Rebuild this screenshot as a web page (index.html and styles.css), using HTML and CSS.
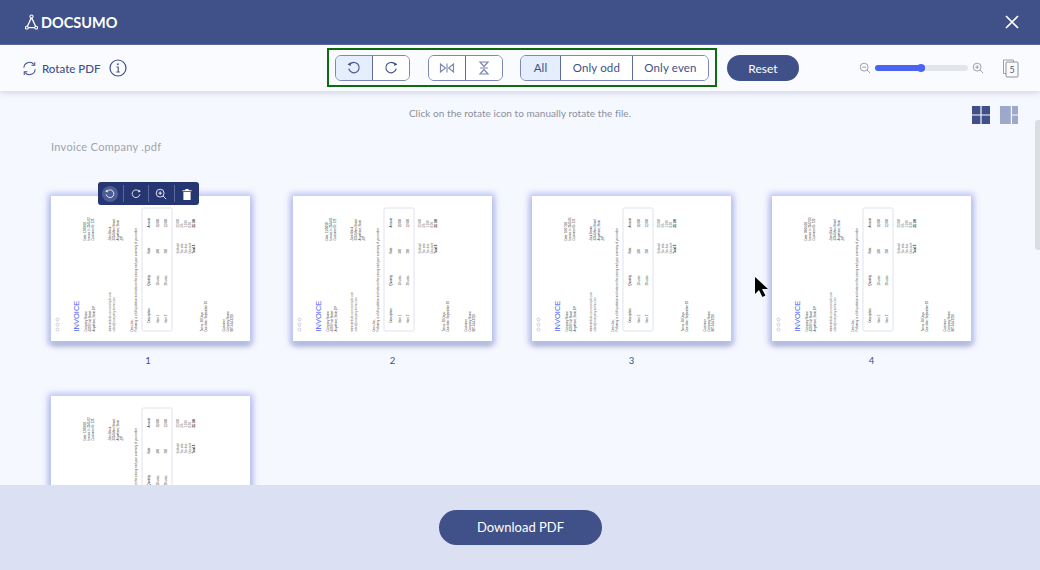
FILE: index.html
```html
<!DOCTYPE html>
<html lang="en">
<head>
  <meta charset="UTF-8" />
  <title>Docsumo - Rotate PDF</title>
  <link rel="stylesheet" href="styles.css">
</head>
<body>
  <svg class="sprites" width="0" height="0">
    <symbol id="ccw" viewBox="0 0 16 16"><path d="M4 4.2A5.2 5.2 0 1 1 2.9 9" fill="none" stroke="currentColor" stroke-width="1.1" stroke-linecap="round"/><path d="M1.6 4.4 4.5 2.2 4.9 5.9Z" fill="currentColor"/></symbol>
    <symbol id="cw" viewBox="0 0 16 16"><path d="M12 4.2A5.2 5.2 0 1 0 13.1 9" fill="none" stroke="currentColor" stroke-width="1.1" stroke-linecap="round"/><path d="M14.4 4.4 11.5 2.2 11.1 5.9Z" fill="currentColor"/></symbol>
    <symbol id="zoom-in" viewBox="0 0 14 14"><circle cx="6" cy="6" r="4.6" fill="none" stroke="currentColor" stroke-width="1"/><path d="M9.4 9.4 13 13M6 3.8v4.4M3.8 6h4.4" fill="none" stroke="currentColor" stroke-width="1"/></symbol>
    <symbol id="zoom-out" viewBox="0 0 14 14"><circle cx="6" cy="6" r="4.6" fill="none" stroke="currentColor" stroke-width="1"/><path d="M9.4 9.4 13 13M3.8 6h4.4" fill="none" stroke="currentColor" stroke-width="1"/></symbol>
  </svg>

  <header class="topbar">
    <div class="logo">
      <svg class="logo-icon" viewBox="0 0 14 17"><path d="M7 3.5 2 14.5h10Z" fill="none" stroke="#fff" stroke-width="1.4"/><circle cx="7" cy="2.6" r="1.7" fill="#405089" stroke="#fff" stroke-width="1.2"/><circle cx="2" cy="14.6" r="1.5" fill="#405089" stroke="#fff" stroke-width="1.2"/><circle cx="12" cy="14.6" r="1.5" fill="#405089" stroke="#fff" stroke-width="1.2"/></svg>
      <span>DOCSUMO</span>
    </div>
    <svg class="close-icon" viewBox="0 0 14 14"><path d="M1 1 13 13M13 1 1 13" stroke="#fff" stroke-width="1.7" fill="none"/></svg>
  </header>

  <div class="toolbar">
    <div class="toolbar-title">
      <svg class="sync-icon" viewBox="0 0 16 16"><path d="M2 7.2A6 6 0 0 1 12.6 3.6M14 8.8A6 6 0 0 1 3.4 12.4" fill="none" stroke="currentColor" stroke-width="1.1"/><path d="M13.6 1.2v3.4h-3.4M2.4 14.8v-3.4h3.4" fill="none" stroke="currentColor" stroke-width="1.1"/></svg>
      <span>Rotate PDF</span>
      <svg class="info-icon" viewBox="0 0 18 18"><circle cx="9" cy="9" r="8" fill="none" stroke="currentColor" stroke-width="1.2"/><path d="M7.6 8h1.6v5M7.4 13h3.4" fill="none" stroke="currentColor" stroke-width="1.1"/><circle cx="8.9" cy="5.2" r=".9" fill="currentColor"/></svg>
    </div>

    <div class="controls">
      <div class="btn-group">
        <button class="active icon-btn"><svg><use href="#ccw"/></svg></button>
        <button class="icon-btn"><svg><use href="#cw"/></svg></button>
      </div>
      <div class="btn-group">
        <button class="icon-btn"><svg viewBox="0 0 16 16"><path d="M1.5 4v8L6.3 8ZM14.5 4v8L9.7 8Z" fill="none" stroke="#7d88b3" stroke-width="1.2"/><path d="M8 3.5v9" stroke="#7d88b3" stroke-width="1.1"/></svg></button>
        <button class="icon-btn"><svg viewBox="0 0 16 16"><path d="M4 2h8L8 6.5ZM4 14h8L8 9.5Z" fill="none" stroke="#7d88b3" stroke-width="1.2"/><path d="M4 8h8" stroke="#7d88b3" stroke-width="1.1"/></svg></button>
      </div>
      <div class="btn-group text-group">
        <button class="active btn-all">All</button>
        <button class="btn-odd">Only odd</button>
        <button class="btn-even">Only even</button>
      </div>
    </div>

    <button class="reset-btn">Reset</button>

    <div class="zoom">
      <svg class="zoom-icon"><use href="#zoom-out"/></svg>
      <div class="slider"><div class="slider-fill"></div></div>
      <svg class="zoom-icon"><use href="#zoom-in"/></svg>
    </div>

    <div class="page-count">
      <svg viewBox="0 0 17 19"><path d="M11.5 3V1H1.5v13.5H4" fill="none" stroke="#9a9ea6" stroke-width="1"/><rect x="4" y="3" width="12" height="15" rx="1" fill="#fafbff" stroke="#8d9199" stroke-width="1"/></svg>
      <span>5</span>
    </div>
  </div>

  <main class="content">
    <p class="hint">Click on the rotate icon to manually rotate the file.</p>
    <div class="view-switch">
      <svg viewBox="0 0 18 18"><path d="M0 0h8.4v8.4H0ZM9.6 0H18v8.4H9.6ZM0 9.6h8.4V18H0ZM9.6 9.6H18V18H9.6Z" fill="#405089"/></svg>
      <svg viewBox="0 0 18 18"><path d="M0 0h10.8v18H0ZM12 0h6v8.4h-6ZM12 9.6h6V18h-6Z" fill="#9ea8cb"/></svg>
    </div>
    <h3 class="file-name">Invoice Company .pdf</h3>
    <div class="pages" id="pages"></div>

    <div class="scroll-thumb"></div>
    <svg class="cursor" viewBox="0 0 15 22"><path d="M1 0v17l4-4 3.4 7 3-1.4L8 12h6Z" fill="#000"/></svg>
  </main>

  <footer class="footer">
    <button class="download-btn">Download PDF</button>
  </footer>

  <script src="script.js"></script>
</body>
</html>
```

FILE: styles.css
```css
* {
  box-sizing: border-box;
}

html, body {
  height: 100%;
}

body {
  margin: 0;
  width: 1040px;
  height: 570px;
  overflow: hidden;
  display: flex;
  flex-direction: column;
  font-family: "Lato", sans-serif;
  background: #f6f8ff;
  color: #405089;
}

button {
  font-family: inherit;
  cursor: pointer;
}

.sprites {
  display: block;
  height: 0;
}

.topbar {
  height: 45px;
  flex: none;
  display: flex;
  align-items: center;
  justify-content: space-between;
  padding: 0 21px 0 25px;
  background: #405089;
  border-bottom: 1px solid #5a6a9e;
}

.logo {
  display: flex;
  align-items: center;
  gap: 3px;
  color: #fff;
  font-size: 14.5px;
  font-weight: 700;
}

.logo-icon {
  width: 13px;
  height: 16px;
}

.close-icon {
  width: 14px;
  height: 14px;
}

.toolbar {
  height: 46px;
  flex: none;
  display: flex;
  align-items: center;
  padding-left: 22px;
  background: #fafbff;
  box-shadow: 0 2px 6px rgba(60, 70, 110, 0.2);
  position: relative;
  z-index: 2;
}

.toolbar-title {
  width: 305px;
  display: flex;
  align-items: center;
  font-size: 11.5px;
  font-weight: 500;
}

.sync-icon {
  width: 15px;
  height: 15px;
  margin-right: 5px;
}

.info-icon {
  width: 18px;
  height: 18px;
  margin-left: 9px;
}

.controls {
  width: 390px;
  height: 39px;
  margin-top: -1px;
  padding: 0 6px;
  display: flex;
  align-items: center;
  gap: 18px;
  border: 2px solid #0f6b12;
}

.btn-group {
  display: flex;
  height: 26px;
  border: 1px solid #7d88b3;
  border-radius: 6px;
  overflow: hidden;
  background: #fff;
}

.btn-group button {
  height: 100%;
  padding: 0;
  border: none;
  border-right: 1px solid #5f6d9e;
  background: #fff;
  color: #405089;
}

.btn-group button:last-child {
  border-right: none;
}

.btn-group .active {
  background: #e4eefc;
}

.icon-btn {
  width: 37px;
  display: flex;
  align-items: center;
  justify-content: center;
}

.icon-btn svg {
  width: 16px;
  height: 16px;
}

.text-group {
  margin-left: -1px;
}

.text-group button {
  font-size: 11.5px;
  letter-spacing: 0.15px;
}

.btn-all {
  width: 40px;
}

.btn-odd {
  width: 73px;
}

.btn-even {
  width: 76px;
}

.reset-btn {
  width: 72px;
  height: 26px;
  margin-left: 10px;
  border: none;
  border-radius: 13px;
  background: #405089;
  color: #fff;
  font-size: 12px;
}

.zoom {
  display: flex;
  align-items: center;
  margin-left: 60px;
  gap: 4px;
}

.zoom-icon {
  width: 12px;
  height: 12px;
  color: #8f9399;
}

.slider {
  width: 93px;
  height: 6px;
  border-radius: 3px;
  background: #e2e5ea;
}

.slider-fill {
  width: 50px;
  height: 6px;
  border-radius: 3px;
  background: #4a63f5;
  position: relative;
}

.slider-fill::after {
  content: "";
  position: absolute;
  right: 0;
  top: -1px;
  width: 8px;
  height: 8px;
  border-radius: 50%;
  background: #4a63f5;
}

.page-count {
  width: 17px;
  height: 19px;
  margin-left: 18px;
  position: relative;
  font-size: 9px;
  color: #55595f;
}

.page-count svg {
  width: 17px;
  height: 19px;
}

.page-count span {
  position: absolute;
  left: 7.5px;
  top: 5px;
  line-height: 12px;
}

.content {
  flex: 1;
  position: relative;
  overflow: hidden;
  padding: 0 0 0 51px;
}

.hint {
  margin: 15px 0 0 -51px;
  text-align: center;
  font-size: 10px;
  line-height: 14px;
  letter-spacing: 0.05px;
  color: #8b8f9a;
}

.view-switch {
  position: absolute;
  top: 15px;
  right: 22px;
  display: flex;
  gap: 10px;
}

.view-switch svg {
  width: 18px;
  height: 18px;
}

.file-name {
  margin: 19px 0 0;
  font-size: 11px;
  line-height: 16px;
  font-weight: 400;
  letter-spacing: 0.3px;
  color: #a0a3ab;
}

.pages {
  margin-top: 41px;
  display: grid;
  grid-template-columns: 242px 239px 240px 199px;
  row-gap: 28px;
}

.page-cell {
  width: 199px;
  position: relative;
}

.page {
  width: 199px;
  height: 145px;
  display: flex;
  align-items: center;
  justify-content: center;
  overflow: hidden;
  background: #fff;
}

.page-frame {
  box-shadow: 0 0 6px 3px #bfc7f7, 0 4px 6px rgba(60, 70, 110, 0.6);
}

.page-no {
  margin-top: 13px;
  text-align: center;
  font-size: 9.5px;
  line-height: 14px;
}

.page-cell:first-child .page-no {
  margin-right: 5px;
}

.page-tools {
  position: absolute;
  left: 47px;
  top: -14px;
  width: 101px;
  height: 23px;
  display: flex;
  align-items: center;
  border-radius: 3px;
  background: #263673;
  color: #fff;
}

.page-tools span {
  flex: 1;
  height: 17px;
  display: flex;
  align-items: center;
  justify-content: center;
  border-right: 1px solid #5a689c;
}

.page-tools span:last-child {
  border-right: none;
}

.page-tools svg {
  width: 12px;
  height: 12px;
}

.page-tools .tool-on svg {
  width: 16px;
  height: 16px;
  padding: 2px;
  border-radius: 50%;
  background: #4d5c94;
}

/* invoice drawn upright, then turned on its side */
.invoice {
  flex: none;
  width: 145px;
  height: 200px;
  padding: 5px 11px 0 10px;
  transform: rotate(-90deg);
  font-family: "Liberation Sans", sans-serif;
  font-size: 2.8px;
  line-height: 4px;
  color: #444;
}

.dots {
  display: flex;
  gap: 1px;
}

.dots i {
  width: 4px;
  height: 4px;
  border: 0.6px solid #ccd;
  border-radius: 50%;
}

.inv-top {
  display: grid;
  grid-template-columns: 91px 1fr;
  margin-top: 13px;
}

.inv-title {
  margin-bottom: 4px;
  font-size: 7.5px;
  line-height: 7px;
  color: #4a63f5;
}

.inv-right {
  padding-top: 10px;
}

.inv-mid {
  display: grid;
  grid-template-columns: 91px 1fr;
  margin-top: 12px;
}

.inv-mid div:first-child {
  color: #777;
}

.inv-note {
  margin-top: 6px;
  color: #555;
}

.inv-table {
  margin-top: 4px;
  height: 31px;
  display: grid;
  grid-template-columns: 37px 32px 26px 1fr;
  align-content: space-evenly;
  padding: 0 0 0 8px;
  border: 0.7px solid #dfe3ef;
  border-radius: 2px;
}

.inv-table b {
  font-weight: 400;
  color: #222;
}

.inv-totals {
  display: grid;
  grid-template-columns: 13px 12px;
  justify-content: start;
  column-gap: 13px;
  margin: 3px 0 0 78px;
  color: #666;
}

.inv-totals b {
  font-weight: 700;
  color: #222;
}

.inv-terms {
  margin-top: 4px;
}

.inv-customer {
  margin-top: 14px;
}

.scroll-thumb {
  position: absolute;
  right: 0;
  top: 29px;
  width: 5px;
  height: 130px;
  border-radius: 3px 0 0 3px;
  background: #dcdde0;
}

.cursor {
  position: absolute;
  left: 754px;
  top: 186px;
  width: 15px;
  height: 22px;
}

.footer {
  height: 85px;
  flex: none;
  display: flex;
  align-items: center;
  justify-content: center;
  background: #dbe0f3;
  position: relative;
  z-index: 2;
}

.download-btn {
  width: 163px;
  height: 35px;
  margin: -1px 0 0 1px;
  border: none;
  border-radius: 18px;
  background: #405089;
  color: #fff;
  font-size: 13px;
}
```

FILE: script.js
```js
const pageList = document.getElementById("pages");

const docs = [
  { date: "Date: 12/09/18", no: "Invoice #: 2345-02", cust: "Customer ID: 123", to: "John Block" },
  { date: "Date: 11/08/18", no: "Invoice #: 2344-01", cust: "Customer ID: 122", to: "Jane Black" },
  { date: "Date: 10/07/18", no: "Invoice #: 2343-05", cust: "Customer ID: 121", to: "Jack Brown" },
  { date: "Date: 09/06/18", no: "Invoice #: 2342-03", cust: "Customer ID: 120", to: "Joan Blunt" },
  { date: "Date: 12/09/18", no: "Invoice #: 2345-02", cust: "Customer ID: 123", to: "John Block" }
];

function invoiceHtml(doc) {
  return `
    <div class="invoice">
      <div class="dots"><i></i><i></i><i></i></div>
      <div class="inv-top">
        <div>
          <div class="inv-title">INVOICE</div>
          Company Name<br>4320 First Street<br>Anywhere, State ZIP
        </div>
        <div class="inv-right">${doc.date}<br>${doc.no}<br>${doc.cust}</div>
      </div>
      <div class="inv-mid">
        <div>www.website.com.example.com<br>sales@company.name.com</div>
        <div>${doc.to}<br>3234 Main Street<br>Anywhere, State<br>ZIP</div>
      </div>
      <div class="inv-note">Dear Joe,<br>Following is a full quotation and note on the pricing and your summary of your order.</div>
      <div class="inv-table">
        <b>Description</b><b>Quantity</b><b>Rate</b><b>Amount</b>
        <span>Item 1</span><span>10 units</span><span>300</span><span>10,000</span>
        <span>Item 2</span><span>20 units</span><span>200</span><span>12,000</span>
      </div>
      <div class="inv-totals">
        <span>Subtotal</span><span>22,000</span>
        <span>Tax rate</span><span>5%</span>
        <span>Tax due</span><span>1,100</span>
        <span>Discount</span><span>0.00</span>
        <b>Total $</b><b>23,100</b>
      </div>
      <div class="inv-terms">Terms: 30 Days<br>Due date: September 20</div>
      <div class="inv-customer">Customer<br>Company Name<br>987-654-3210</div>
    </div>`;
}

const tools = `
  <div class="page-tools">
    <span class="tool-on"><svg><use href="#ccw"/></svg></span>
    <span><svg><use href="#cw"/></svg></span>
    <span><svg><use href="#zoom-in"/></svg></span>
    <span><svg viewBox="0 0 12 12"><path d="M1.5 2.2h9v1.1h-9ZM4.4 2.2V.9h3.2v1.3ZM2.4 4h7.2v8H2.4Z" fill="#fff"/></svg></span>
  </div>`;

docs.forEach((doc, i) => {
  const cell = document.createElement("div");
  cell.className = "page-cell";
  cell.innerHTML = `
    <div class="page-frame"><div class="page">${invoiceHtml(doc)}</div></div>
    ${i === 0 ? tools : ""}
    <div class="page-no">${i + 1}</div>
  `;
  pageList.appendChild(cell);
});
```
